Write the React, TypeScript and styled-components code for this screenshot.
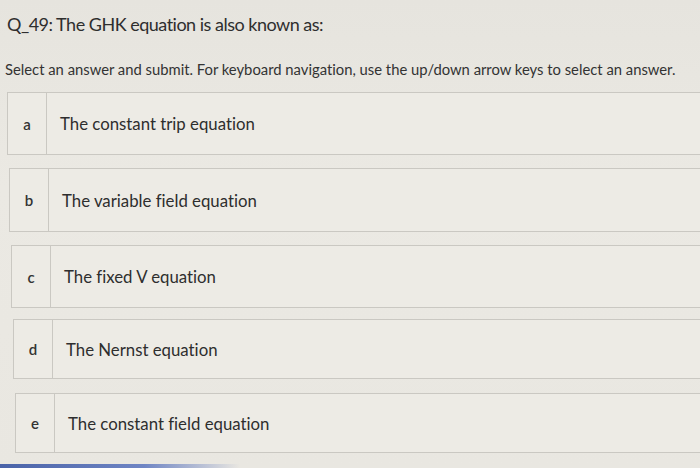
import React from "react";
import styled, { createGlobalStyle } from "styled-components";

const Global = createGlobalStyle`
  html, body {
    margin: 0;
    padding: 0;
    width: 700px;
    height: 468px;
    overflow: hidden;
    background: #e8e6e0;
  }
  body {
    font-family: Lato, "Open Sans", sans-serif;
    font-variant-ligatures: none;
    color: #2f2f2f;
  }
`;

const Page = styled.div`
  position: relative;
  width: 700px;
  height: 468px;
  box-sizing: border-box;
  padding: 12px 0 0 0;
  background: linear-gradient(180deg, #e6e4de 0%, #ebe9e3 40%, #e9e7e1 100%);
`;

const Title = styled.h1`
  margin: 0 0 0 7px;
  font-size: 18px;
  font-weight: 400;
  letter-spacing: -0.5px;
  line-height: 24px;
  color: #2e2e2e;
`;

const Instructions = styled.p`
  margin: 23px 0 0 5px;
  font-size: 14.8px;
  line-height: 20px;
  color: #333;
  white-space: nowrap;
`;

const List = styled.div`
  display: flex;
  flex-direction: column;
  margin-top: 13px;
`;

const Card = styled.div<{ $indent: number; $height: number; $gap: number }>`
  display: flex;
  align-items: stretch;
  margin-left: ${(p) => p.$indent}px;
  margin-bottom: ${(p) => p.$gap}px;
  width: 760px;
  height: ${(p) => p.$height}px;
  box-sizing: border-box;
  border: 1.5px solid #cac8c2;
  background: #edebe5;
`;

const Letter = styled.div`
  flex: 0 0 38px;
  display: flex;
  align-items: center;
  justify-content: center;
  border-right: 1.5px solid #cac8c2;
  font-size: 15px;
  font-weight: 600;
  color: #333;
`;

const Answer = styled.div`
  display: flex;
  align-items: center;
  padding-left: 13px;
  font-size: 16.8px;
  color: #2e2e2e;
`;

const Taskbar = styled.div`
  position: absolute;
  left: 0;
  bottom: 0;
  width: 240px;
  height: 4px;
  background: linear-gradient(90deg, #4a63a8 0%, #6f85c4 60%, rgba(160, 175, 215, 0) 100%);
`;

const answers = [
  { letter: "a", text: "The constant trip equation", indent: 7, height: 63, gap: 13 },
  { letter: "b", text: "The variable field equation", indent: 9, height: 64, gap: 13 },
  { letter: "c", text: "The fixed V equation", indent: 11, height: 63, gap: 11 },
  { letter: "d", text: "The Nernst equation", indent: 13, height: 60, gap: 14 },
  { letter: "e", text: "The constant field equation", indent: 15, height: 60, gap: 0 },
];

export default function App() {
  return (
    <Page>
      <Global />
      <Title>Q_49: The GHK equation is also known as:</Title>
      <Instructions>
        Select an answer and submit. For keyboard navigation, use the up/down arrow keys to select an answer.
      </Instructions>
      <List>
        {answers.map((a) => (
          <Card key={a.letter} $indent={a.indent} $height={a.height} $gap={a.gap}>
            <Letter>{a.letter}</Letter>
            <Answer>{a.text}</Answer>
          </Card>
        ))}
      </List>
      <Taskbar />
    </Page>
  );
}
